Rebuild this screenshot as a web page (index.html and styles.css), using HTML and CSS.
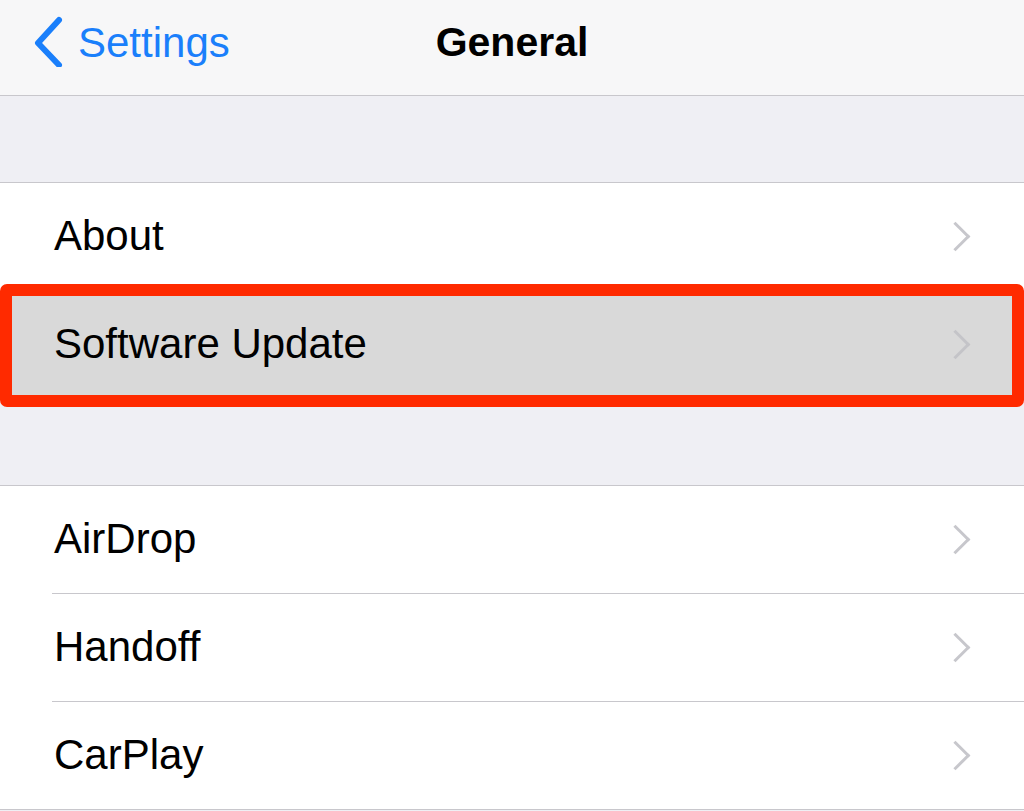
FILE: index.html
```html
<!DOCTYPE html>
<html lang="en">
<head>
    <meta charset="UTF-8">
    <meta name="viewport" content="width=device-width, initial-scale=1.0">
    <title>General</title>
    <link rel="stylesheet" href="styles.css">
</head>
<body>
    <!-- Barra de navegação -->
    <div class="navbar">
        <a class="back" href="#">
            <svg class="back-icon" width="30" height="52" viewBox="0 0 30 52">
                <polyline points="25,5 4,28 25,50" fill="none" stroke="#1a7ffb" stroke-width="6" stroke-linecap="round" stroke-linejoin="round"/>
            </svg>
            <span>Settings</span>
        </a>
        <div class="title">General</div>
    </div>

    <div class="gap"></div>

    <div class="group">
        <div class="row">
            <span class="label">About</span>
            <span class="chevron"></span>
        </div>
        <div class="row row-active">
            <span class="label">Software Update</span>
            <span class="chevron"></span>
        </div>
    </div>

    <div class="gap"></div>

    <div class="group">
        <div class="row">
            <span class="label">AirDrop</span>
            <span class="chevron"></span>
        </div>
        <div class="row">
            <span class="label">Handoff</span>
            <span class="chevron"></span>
        </div>
        <div class="row">
            <span class="label">CarPlay</span>
            <span class="chevron"></span>
        </div>
    </div>

    <!-- Destaque vermelho por cima -->
    <div class="highlight"></div>
</body>
</html>
```

FILE: styles.css
```css
body {
    font-family: "Liberation Sans", Arial, sans-serif;
    margin: 0;
    padding: 0;
    background: #efeff4;
    color: #000;
    position: relative;
    overflow: hidden;
    height: 811px;
}

.navbar {
    height: 95px;
    background: #f7f7f8;
    border-bottom: 1px solid #c8c7cc;
    position: relative;
    display: flex;
    align-items: center;
    justify-content: center;
}

.back {
    position: absolute;
    left: 34px;
    top: 15px;
    display: flex;
    align-items: center;
    gap: 14px;
    color: #1a7ffb;
    text-decoration: none;
    font-size: 42px;
}

.back span {
    margin-top: 4px;
}

.title {
    font-size: 41px;
    font-weight: bold;
    margin-top: -10px;
}

.gap {
    height: 86px;
    border-bottom: 1px solid #c8c7cc;
}

.group {
    background: #fff;
    border-bottom: 1px solid #c8c7cc;
}

.row {
    height: 107px;
    display: flex;
    align-items: center;
    justify-content: space-between;
    padding: 0 52px 0 54px;
    font-size: 42px;
    position: relative;
}

.row + .row::before {
    content: "";
    position: absolute;
    left: 52px;
    right: 0;
    top: -1px;
    border-top: 1px solid #c8c7cc;
}

.row + .row {
    margin-top: 1px;
}

.row-active {
    background: #d9d9d9;
}

.label {
    margin-top: -2px;
}

.chevron {
    width: 18px;
    height: 18px;
    border-top: 3px solid #c7c7cc;
    border-right: 3px solid #c7c7cc;
    transform: rotate(45deg);
    margin-right: 6px;
}

.row-active .chevron {
    border-color: #c4c4c8;
}

.highlight {
    position: absolute;
    left: 0;
    top: 284px;
    width: 1024px;
    height: 123px;
    box-sizing: border-box;
    border: 12px solid #ff2a00;
    border-radius: 7px;
}
```
